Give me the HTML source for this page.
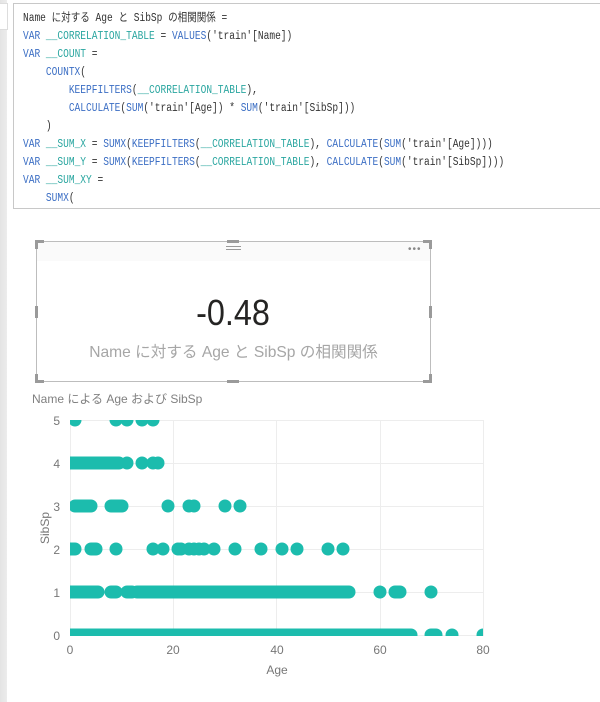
<!DOCTYPE html>
<html><head><meta charset="utf-8"><style>
*{margin:0;padding:0;box-sizing:border-box}
body{width:600px;height:702px;background:#fff;position:relative;overflow:hidden;font-family:"Liberation Sans","Noto Sans CJK JP",sans-serif}
.strip{position:absolute;left:0;top:0;width:7px;height:702px;background:linear-gradient(90deg,#e4e4e4,#ececec)}
.sbox{position:absolute;left:0;top:3px;width:8px;height:27px;background:#fff;border:1px solid #ddd;border-left:none}
.code{position:absolute;left:13px;top:3px;width:600px;height:206px;border:1px solid #c8c8c8;background:#fff}
.code pre{position:absolute;left:9px;top:6px;font-family:"Liberation Mono","Noto Sans CJK JP",monospace;font-size:11.5px;line-height:18px;color:#333;transform:scaleX(.83);transform-origin:0 0}
.k{color:#3b6ec4}.v{color:#2aa6a0}
.card{position:absolute;left:36px;top:241px;width:395px;height:141px;border:1px solid #bdbdbd;background:#fff}
.hdr{position:absolute;left:0;top:0;width:100%;height:19px;background:#fafafa}
.h{position:absolute;background:#9a9a9a}
.val{position:absolute;left:36px;width:395px;top:293px;text-align:center;font-size:36px;color:#252423;line-height:40px}
.val span{display:inline-block;transform:scaleX(.9)}
.sub{position:absolute;left:36px;width:395px;top:341px;text-align:center;font-size:15.6px;color:#a6a6a6;line-height:24px}
.t{position:absolute;font-size:12px;color:#808080;white-space:nowrap}
</style></head><body>
<div class="strip"></div><div class="sbox"></div>
<div class="code"><pre>Name に対する Age と SibSp の相関関係 =
<span class="k">VAR</span> <span class="v">__CORRELATION_TABLE</span> = <span class="k">VALUES</span>('train'[Name])
<span class="k">VAR</span> <span class="v">__COUNT</span> =
    <span class="k">COUNTX</span>(
        <span class="k">KEEPFILTERS</span>(<span class="v">__CORRELATION_TABLE</span>),
        <span class="k">CALCULATE</span>(<span class="k">SUM</span>('train'[Age]) * <span class="k">SUM</span>('train'[SibSp]))
    )
<span class="k">VAR</span> <span class="v">__SUM_X</span> = <span class="k">SUMX</span>(<span class="k">KEEPFILTERS</span>(<span class="v">__CORRELATION_TABLE</span>), <span class="k">CALCULATE</span>(<span class="k">SUM</span>('train'[Age])))
<span class="k">VAR</span> <span class="v">__SUM_Y</span> = <span class="k">SUMX</span>(<span class="k">KEEPFILTERS</span>(<span class="v">__CORRELATION_TABLE</span>), <span class="k">CALCULATE</span>(<span class="k">SUM</span>('train'[SibSp])))
<span class="k">VAR</span> <span class="v">__SUM_XY</span> =
    <span class="k">SUMX</span>(</pre></div>

<div class="card"><div class="hdr"></div>
<div style="position:absolute;left:189px;top:4px;width:15px;height:1px;background:#999"></div>
<div style="position:absolute;left:189px;top:7px;width:15px;height:1px;background:#999"></div>
<div style="position:absolute;left:371px;top:6px;font-size:10px;color:#888;letter-spacing:1px;line-height:4px">•••</div>
</div>
<div class="h" style="left:35px;top:240px;width:9px;height:3px"></div><div class="h" style="left:35px;top:240px;width:3px;height:9px"></div>
<div class="h" style="left:423px;top:240px;width:9px;height:3px"></div><div class="h" style="left:429px;top:240px;width:3px;height:9px"></div>
<div class="h" style="left:35px;top:380px;width:9px;height:3px"></div><div class="h" style="left:35px;top:374px;width:3px;height:9px"></div>
<div class="h" style="left:423px;top:380px;width:9px;height:3px"></div><div class="h" style="left:429px;top:374px;width:3px;height:9px"></div>
<div class="h" style="left:227px;top:240px;width:12px;height:3px"></div><div class="h" style="left:227px;top:380px;width:12px;height:3px"></div>
<div class="h" style="left:35px;top:306px;width:3px;height:12px"></div><div class="h" style="left:429px;top:306px;width:3px;height:12px"></div>
<div class="val"><span>-0.48</span></div>
<div class="sub">Name に対する Age と SibSp の相関関係</div>

<div class="t" style="left:32px;top:390px">Name による Age および SibSp</div>

<svg style="position:absolute;left:0;top:0" width="600" height="702">
<defs><clipPath id="c"><rect x="70" y="420" width="413" height="216"/></clipPath></defs>
<g stroke="#ededed" stroke-width="1">
<line x1="70.5" y1="420" x2="70.5" y2="636"/><line x1="173.5" y1="420" x2="173.5" y2="636"/><line x1="276.5" y1="420" x2="276.5" y2="636"/><line x1="380.5" y1="420" x2="380.5" y2="636"/><line x1="483.5" y1="420" x2="483.5" y2="636"/>
<line x1="70" y1="420.5" x2="483" y2="420.5"/><line x1="70" y1="463.5" x2="483" y2="463.5"/><line x1="70" y1="506.5" x2="483" y2="506.5"/><line x1="70" y1="549.5" x2="483" y2="549.5"/><line x1="70" y1="592.5" x2="483" y2="592.5"/><line x1="70" y1="635.5" x2="483" y2="635.5"/>
</g>
<g clip-path="url(#c)" fill="#1cbcad" stroke="#1cbcad" stroke-width="13" stroke-linecap="round">
<g stroke="none">
<circle cx="75" cy="420" r="6.5"/><circle cx="116" cy="420" r="6.5"/><circle cx="127" cy="420" r="6.5"/><circle cx="142" cy="420" r="6.5"/><circle cx="153" cy="420" r="6.5"/>
<circle cx="127" cy="463" r="6.5"/><circle cx="142" cy="463" r="6.5"/><circle cx="153" cy="463" r="6.5"/><circle cx="158" cy="463" r="6.5"/>
<circle cx="168" cy="506" r="6.5"/><circle cx="189" cy="506" r="6.5"/><circle cx="194" cy="506" r="6.5"/><circle cx="225" cy="506" r="6.5"/><circle cx="240" cy="506" r="6.5"/>
<circle cx="116" cy="549" r="6.5"/><circle cx="153" cy="549" r="6.5"/><circle cx="163" cy="549" r="6.5"/><circle cx="178" cy="549" r="6.5"/><circle cx="181" cy="549" r="6.5"/><circle cx="189" cy="549" r="6.5"/><circle cx="194" cy="549" r="6.5"/><circle cx="199" cy="549" r="6.5"/><circle cx="204" cy="549" r="6.5"/><circle cx="214" cy="549" r="6.5"/><circle cx="235" cy="549" r="6.5"/><circle cx="261" cy="549" r="6.5"/><circle cx="282" cy="549" r="6.5"/><circle cx="297" cy="549" r="6.5"/><circle cx="328" cy="549" r="6.5"/><circle cx="343" cy="549" r="6.5"/>
<circle cx="380" cy="592" r="6.5"/><circle cx="431" cy="592" r="6.5"/>
<circle cx="452" cy="635" r="6.5"/><circle cx="483" cy="635" r="6.5"/>
</g>
<line x1="70" y1="463" x2="119" y2="463"/>
<line x1="75" y1="506" x2="91" y2="506"/><line x1="111" y1="506" x2="122" y2="506"/>
<line x1="70" y1="549" x2="75" y2="549"/><line x1="91" y1="549" x2="96" y2="549"/>
<line x1="70" y1="592" x2="98" y2="592"/><line x1="111" y1="592" x2="116" y2="592"/><line x1="127" y1="592" x2="132" y2="592"/><line x1="137" y1="592" x2="349" y2="592"/><line x1="395" y1="592" x2="400" y2="592"/>
<line x1="70" y1="635" x2="411" y2="635"/><line x1="431" y1="635" x2="436" y2="635"/>
</g>
<g font-family="Liberation Sans,sans-serif" font-size="12" fill="#777" text-anchor="end">
<text x="60" y="425">5</text><text x="60" y="468">4</text><text x="60" y="511">3</text><text x="60" y="554">2</text><text x="60" y="597">1</text><text x="60" y="640">0</text>
</g>
<g font-family="Liberation Sans,sans-serif" font-size="12" fill="#777" text-anchor="middle">
<text x="70" y="654">0</text><text x="173" y="654">20</text><text x="277" y="654">40</text><text x="380" y="654">60</text><text x="483" y="654">80</text>
<text x="277" y="674">Age</text>
<text transform="translate(49,528) rotate(-90)">SibSp</text>
</g>
</svg>
</body></html>
